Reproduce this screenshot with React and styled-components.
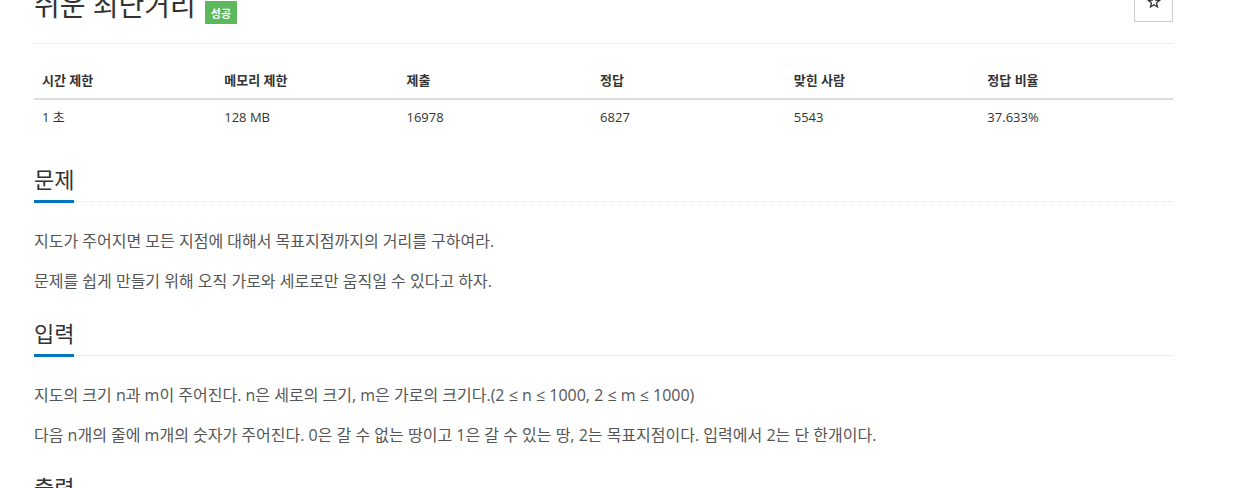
import styled, { createGlobalStyle } from "styled-components";

const GlobalStyle = createGlobalStyle`
  body {
    margin: 0;
    background: #ffffff;
    font-family: "Open Sans", "Noto Sans CJK KR", sans-serif;
    color: #333333;
    overflow: hidden;
  }
`;

const stats = [
  { label: "시간 제한", value: "1 초", width: "16%" },
  { label: "메모리 제한", value: "128 MB", width: "16%" },
  { label: "제출", value: "16978", width: "17%" },
  { label: "정답", value: "6827", width: "17%" },
  { label: "맞힌 사람", value: "5543", width: "17%" },
  { label: "정답 비율", value: "37.633%", width: "17%" },
];

const sections = [
  {
    title: "문제",
    paragraphs: [
      "지도가 주어지면 모든 지점에 대해서 목표지점까지의 거리를 구하여라.",
      "문제를 쉽게 만들기 위해 오직 가로와 세로로만 움직일 수 있다고 하자.",
    ],
  },
  {
    title: "입력",
    paragraphs: [
      "지도의 크기 n과 m이 주어진다. n은 세로의 크기, m은 가로의 크기다.(2 ≤ n ≤ 1000, 2 ≤ m ≤ 1000)",
      "다음 n개의 줄에 m개의 숫자가 주어진다. 0은 갈 수 없는 땅이고 1은 갈 수 있는 땅, 2는 목표지점이다. 입력에서 2는 단 한개이다.",
    ],
  },
  { title: "출력", paragraphs: [] },
];

const StarIcon = () => (
  <svg width="14" height="14" viewBox="0 0 14 14" fill="none">
    <path
      d="M7 1.2 L8.55 5.05 L12.7 5.3 L9.5 7.95 L10.55 12 L7 9.75 L3.45 12 L4.5 7.95 L1.3 5.3 L5.45 5.05 Z"
      stroke="#2a2a2a"
      strokeWidth="1.2"
      strokeLinejoin="miter"
    />
  </svg>
);

const App = () => {
  return (
    <>
      <GlobalStyle />
      <Page>
        <HeaderRow>
          <TitleGroup>
            <Title>쉬운 최단거리</Title>
            <Badge>성공</Badge>
          </TitleGroup>
          <StarButton aria-label="star">
            <StarIcon />
          </StarButton>
        </HeaderRow>
        <Divider />
        <StatsTable>
          <colgroup>
            {stats.map((s) => (
              <col key={s.label} style={{ width: s.width }} />
            ))}
          </colgroup>
          <thead>
            <tr>
              {stats.map((s) => (
                <Th key={s.label}>{s.label}</Th>
              ))}
            </tr>
          </thead>
          <tbody>
            <tr>
              {stats.map((s) => (
                <Td key={s.label}>{s.value}</Td>
              ))}
            </tr>
          </tbody>
        </StatsTable>
        {sections.map((section) => (
          <Section key={section.title}>
            <Headline>
              <HeadlineText>{section.title}</HeadlineText>
              <HeadlineRule />
            </Headline>
            <Body>
              {section.paragraphs.map((p) => (
                <Paragraph key={p}>{p}</Paragraph>
              ))}
            </Body>
          </Section>
        ))}
      </Page>
    </>
  );
};

export default App;

const Page = styled.div`
  width: 1139px;
  margin-left: 34px;
  margin-top: -12px;
`;

const HeaderRow = styled.div`
  display: flex;
  justify-content: space-between;
  align-items: flex-start;
  height: 34px;
`;

const TitleGroup = styled.div`
  display: flex;
  align-items: flex-start;
`;

const Title = styled.h1`
  margin: 0;
  font-size: 28px;
  line-height: 34px;
  font-weight: 400;
  color: #333333;
`;

const Badge = styled.span`
  margin: 13px 0 0 9px;
  height: 23px;
  padding: 0 6px;
  display: flex;
  align-items: center;
  background: #5cb85c;
  color: #ffffff;
  font-size: 11px;
  font-weight: 700;
`;

const StarButton = styled.button`
  width: 39px;
  height: 34px;
  padding: 0 0 6px;
  display: flex;
  align-items: center;
  justify-content: center;
  border: 1px solid #cccccc;
  background: #ffffff;
`;

const Divider = styled.div`
  margin-top: 21px;
  border-top: 1px solid #eeeeee;
`;

const StatsTable = styled.table`
  width: 100%;
  margin-top: 18px;
  border-collapse: collapse;
  font-size: 13px;
`;

const Th = styled.th`
  padding: 8px;
  line-height: 20px;
  text-align: left;
  font-weight: 700;
  color: #333333;
  border-bottom: 2px solid #dddddd;
`;

const Td = styled.td`
  padding: 8px;
  line-height: 18px;
  color: #333333;
`;

const Section = styled.section`
  margin-top: 33px;

  & + & {
    margin-top: 28px;
  }
`;

const Headline = styled.div`
  display: flex;
  align-items: flex-end;
`;

const HeadlineText = styled.h2`
  margin: 0;
  padding-bottom: 9px;
  font-size: 22px;
  line-height: 24px;
  font-weight: 400;
  color: #333333;
  border-bottom: 3px solid #0076c0;
`;

const HeadlineRule = styled.div`
  flex: 1;
  margin-bottom: 1px;
  border-bottom: 1px dotted #e4e4e4;
`;

const Body = styled.div`
  padding-top: 26px;
  display: flex;
  flex-direction: column;
  gap: 16px;
`;

const Paragraph = styled.p`
  margin: 0;
  font-size: 16px;
  line-height: 24px;
  color: #555555;
`;
